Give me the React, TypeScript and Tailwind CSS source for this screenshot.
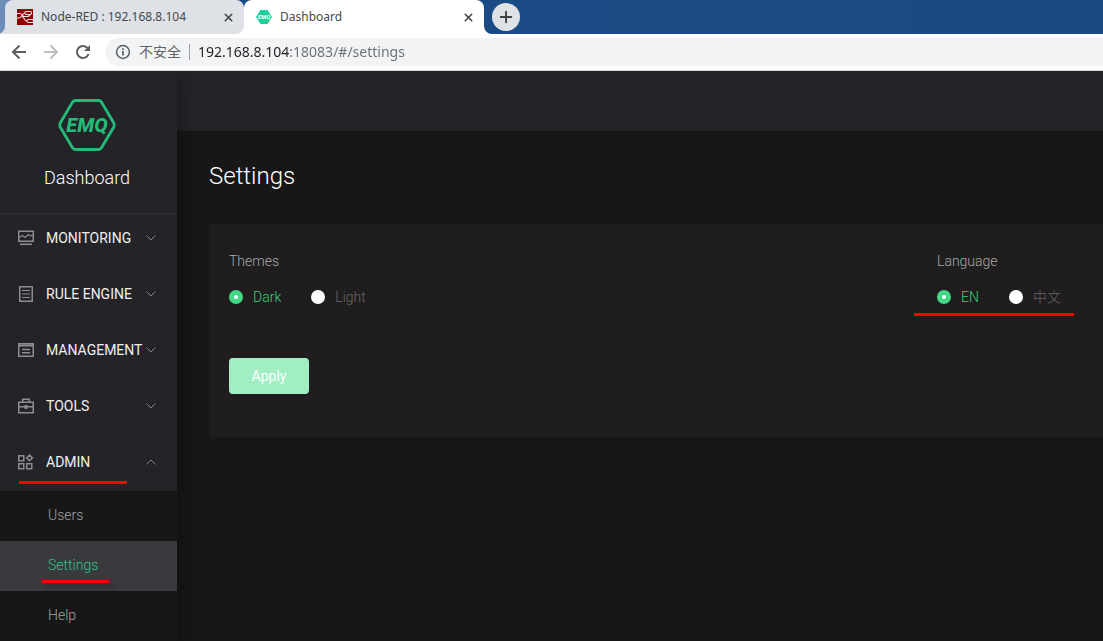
import { useState } from 'react';
import type { ReactNode } from 'react';
import clsx from 'clsx';
import { Plus, X } from 'lucide-react';

type MenuItem = {
  label: string;
  icon: ReactNode;
  open?: boolean;
};

const menu: MenuItem[] = [
  {
    label: 'MONITORING',
    icon: (
      <>
        <path d="M0.75 1.25h14.5v10H0.75z" />
        <path d="M1 7.5l3.5-2 2.5 2 3.5-3 2 1.5 2.5-1" strokeWidth="1.2" />
        <path d="M2 14.25h12" />
      </>
    ),
  },
  {
    label: 'RULE ENGINE',
    icon: (
      <>
        <path d="M1.75 0.75h12.5v14.5H1.75z" />
        <path d="M4 4.5h8M4 8h8M4 11.5h8" strokeWidth="1.2" />
      </>
    ),
  },
  {
    label: 'MANAGEMENT',
    icon: (
      <>
        <path d="M0.75 1.75h14.5v12.5H0.75z" />
        <path d="M1 3.5h14" strokeWidth="2" />
        <path d="M4 7.5h8M4 10.75h8" />
        <path d="M4.5 7v1M11.5 10v1.5" strokeWidth="1" />
      </>
    ),
  },
  {
    label: 'TOOLS',
    icon: (
      <>
        <path d="M0.75 4.25h14.5v10.5H0.75z" />
        <path d="M4.75 4V1.25h6.5V4" />
        <path d="M1 8.75h14" />
        <path d="M6.75 7.5h2.5v3h-2.5z" fill="currentColor" strokeWidth="0.8" />
      </>
    ),
  },
  {
    label: 'ADMIN',
    open: true,
    icon: (
      <>
        <path d="M0.75 1.75h5v5h-5zM0.75 9.75h5v5h-5zM8.75 9.75h5v5h-5z" />
        <path d="M11.5 1l2.9 2.9-2.9 2.9-2.9-2.9z" />
      </>
    ),
  },
];

const adminLinks = ['Users', 'Settings', 'Help'];

function TabFlare({ className }: { className: string }) {
  return (
    <svg className={clsx('absolute bottom-0 h-2 w-2', className)} viewBox="0 0 8 8" fill="currentColor">
      <path d="M0 0v8h8A8 8 0 0 1 0 0z" />
    </svg>
  );
}

function NodeRedIcon() {
  return (
    <svg className="h-4 w-4 shrink-0" viewBox="0 0 16 16" fill="none">
      <rect width="16" height="16" fill="#8f0000" />
      <g stroke="#f3dede" strokeWidth="1.1">
        <rect x="8" y="2.5" width="6.5" height="3" rx="1.2" />
        <rect x="10" y="10.5" width="6.5" height="3" rx="1.2" />
        <path d="M0 4.5h3c2 0 2 3 4.5 3h2c3 0 3.5-1.5 3.5-2M0 9h2c3 0 3-5 6-5M5 7.500c2 0 2 4.500 5 4.500" />
      </g>
    </svg>
  );
}

function EmqFavicon() {
  return (
    <svg className="h-4 w-4 shrink-0" viewBox="0 0 16 16">
      <path d="M4.5 1h7L16 8l-4.5 7h-7L0 8z" fill="#1fd09a" />
      <text x="8" y="10" textAnchor="middle" fontFamily="Roboto, sans-serif" fontSize="6" fontWeight="700" fontStyle="italic" fill="#fff">
        EMQ
      </text>
    </svg>
  );
}

function BrowserChrome() {
  const [url, setUrl] = useState('192.168.8.104:18083/#/settings');

  return (
    <header className="relative z-20 font-['Noto_Sans','Noto_Sans_CJK_SC',sans-serif]">
      <div className="flex h-[34px] bg-linear-to-r from-[#6e8db8] from-0% via-[#1b4b86] via-20% to-[#194a80] pl-[5px] text-xs text-[#45494d]">
        <div className="relative flex w-[239px] items-center rounded-t-lg bg-[#dee1e6] pr-2 pl-3">
          <TabFlare className="-left-2 -scale-x-100 text-[#dee1e6]" />
          <NodeRedIcon />
          <span className="ml-2 flex-1 truncate">Node-RED : 192.168.8.104</span>
          <button aria-label="Close Node-RED tab" className="flex h-4 w-4 items-center justify-center">
            <X size={13} strokeWidth={3} />
          </button>
        </div>
        <div className="relative flex w-60 items-center rounded-t-lg bg-white pr-2 pl-3">
          <TabFlare className="-left-2 -scale-x-100 text-white" />
          <EmqFavicon />
          <span className="ml-2 flex-1 truncate">Dashboard</span>
          <button aria-label="Close Dashboard tab" className="flex h-4 w-4 items-center justify-center">
            <X size={13} strokeWidth={3} />
          </button>
          <TabFlare className="-right-2 text-white" />
        </div>
        <button
          aria-label="New tab"
          className="ml-2 flex h-7 w-7 items-center justify-center self-center rounded-full bg-[#dee1e6] text-[#3c4043]"
        >
          <Plus size={18} strokeWidth={2.5} />
        </button>
      </div>

      <div className="flex h-[37px] items-center border-b border-[#d5d8db] bg-white pl-[11px]">
        <button aria-label="Back" className="mr-4 text-[#5a5e63]">
          <svg className="h-4 w-4" viewBox="0 0 16 16" fill="none" stroke="currentColor" strokeWidth="2">
            <path d="M15 8H2.5M8.5 1.5L2 8l6.5 6.5" />
          </svg>
        </button>
        <button aria-label="Forward" className="mr-4 text-[#bcbec1]">
          <svg className="h-4 w-4" viewBox="0 0 16 16" fill="none" stroke="currentColor" strokeWidth="2">
            <path d="M1 8h12.5M7.5 1.5L14 8l-6.5 6.5" />
          </svg>
        </button>
        <button aria-label="Reload" className="text-[#5a5e63]">
          <svg className="h-4 w-4" viewBox="0 0 16 16" fill="none" stroke="currentColor" strokeWidth="2">
            <path d="M13.6 10A6 6 0 1 1 12.6 4.2" />
            <path d="M15 1v6H9z" fill="currentColor" stroke="none" />
          </svg>
        </button>
        <div className="ml-3.5 flex h-7 flex-1 items-center rounded-l-full bg-[#f1f3f4] pl-2.5 text-sm">
          <svg className="h-4 w-4 text-[#5a5e63]" viewBox="0 0 16 16" fill="none" stroke="currentColor">
            <circle cx="8" cy="8" r="6.4" strokeWidth="1.5" />
            <path d="M8 7v4.5M8 4.3v1.7" strokeWidth="1.7" />
          </svg>
          <span className="ml-2 text-[#5f6368]">不安全</span>
          <span className="mx-2 h-4 w-px bg-[#9aa0a6]" />
          <input
            aria-label="Address"
            value={url}
            onChange={(e) => setUrl(e.target.value)}
            className="min-w-0 flex-1 bg-[linear-gradient(to_right,#202124_92px,#6b6f74_92px)] bg-clip-text text-transparent caret-black outline-none"
          />
        </div>
      </div>
    </header>
  );
}

function Logo() {
  return (
    <svg className="h-[54px] w-[60px]" viewBox="0 0 60 54" fill="none">
      <path
        d="M18.5 2.5h23q2 0 3 1.700l12.300 20.800q1 2 0 4L44.500 49.800q-1 1.700-3 1.700h-23q-2 0-3-1.700L3.200 29q-1-2 0-4L15.500 4.200q1-1.700 3-1.700z"
        stroke="#22bb7a"
        strokeWidth="2.8"
      />
      <text x="30" y="34" textAnchor="middle" fontFamily="Roboto, sans-serif" fontSize="20" fontWeight="800" fontStyle="italic" fill="#22bb7a">
        EMQ
      </text>
    </svg>
  );
}

function Sidebar() {
  return (
    <aside className="z-10 w-[177px] shrink-0 bg-[#242328] shadow-[2px_6px_20px_rgba(0,0,0,0.35)]">
      <div className="flex h-[143px] flex-col items-center border-b border-[#2e2d32] pt-[27px] pr-[3px]">
        <Logo />
        <span className="mt-3 text-lg leading-7 text-white">Dashboard</span>
      </div>
      <nav>
        <div className="flex flex-col gap-2 pb-[5px]">
          {menu.map((item) => (
            <button key={item.label} aria-expanded={!!item.open} className="relative flex h-12 items-center pr-5 pl-[18px] text-left">
              <svg className="h-4 w-4 shrink-0 text-[#8b8d92]" viewBox="0 0 16 16" fill="none" stroke="currentColor" strokeWidth="1.5">
                {item.icon}
              </svg>
              <span className="ml-3 flex-1 text-sm font-normal whitespace-nowrap text-[#f0f0f0]">{item.label}</span>
              <svg
                className={clsx('h-3 w-3 shrink-0 text-[#85868a]', item.open && 'rotate-180')}
                viewBox="0 0 12 12"
                fill="none"
                stroke="currentColor"
              >
                <path d="M1.5 3.5L6 8l4.5-4.5" />
              </svg>
              {item.open && <span className="absolute bottom-0.5 left-[19px] h-[3px] w-[108px] bg-[#ff0000]" />}
            </button>
          ))}
        </div>
        <ul className="bg-[#171717]">
          {adminLinks.map((name) => {
            const active = name === 'Settings';
            return (
              <li key={name} className="relative">
                <a
                  href={`#/${name.toLowerCase()}`}
                  className={clsx(
                    'block h-[50px] pl-12 text-sm leading-[48px]',
                    active ? 'bg-[#393a3d] text-[#34c388]' : 'text-[#a3a3a5]'
                  )}
                >
                  {name}
                </a>
                {active && (
                  <span className="absolute bottom-2 left-[42px] h-[3px] w-[67px] bg-[#ff0000] shadow-[4px_4px_4px_rgba(0,0,0,0.3)]" />
                )}
              </li>
            );
          })}
        </ul>
      </nav>
    </aside>
  );
}

type RadioGroupProps = {
  title: string;
  name: string;
  options: string[];
  children?: ReactNode;
};

function RadioGroup({ title, name, options, children }: RadioGroupProps) {
  const [value, setValue] = useState(options[0]);

  return (
    <fieldset className="relative">
      <legend className="text-sm leading-[34px] text-[#a9a9ab]">{title}</legend>
      <div className="flex h-[38px] items-center gap-[30px]">
        {options.map((option) => (
          <label
            key={option}
            className={clsx('flex items-center gap-2.5 text-sm', value === option ? 'text-[#34d378]' : 'text-[#66666a]')}
          >
            <input
              type="radio"
              name={name}
              checked={value === option}
              onChange={() => setValue(option)}
              className="h-3.5 w-3.5 appearance-none rounded-full bg-white checked:border-5 checked:border-[#42d885]"
            />
            {option}
          </label>
        ))}
      </div>
      {children}
    </fieldset>
  );
}

export default function App() {
  return (
    <div className="flex min-h-screen flex-col overflow-hidden bg-[#171717]">
      <BrowserChrome />
      <div className="flex flex-1 font-['Roboto','Noto_Sans_CJK_SC',sans-serif] font-light">
        <Sidebar />
        <div className="min-w-0 flex-1">
          <div className="h-[60px] bg-[#242328]" />
          <main className="pt-[31px] pl-8">
            <h1 className="text-2xl leading-7 text-white">Settings</h1>
            <form className="mt-[34px] rounded-l bg-[#201d1e] px-5 pt-5 pb-[43px]" onSubmit={(e) => e.preventDefault()}>
              <div className="flex">
                <div className="flex-1">
                  <RadioGroup title="Themes" name="theme" options={['Dark', 'Light']} />
                </div>
                <div className="w-[146px]">
                  <RadioGroup title="Language" name="language" options={['EN', '中文']}>
                    <span className="absolute bottom-0 -left-[23px] h-[3px] w-40 bg-[#ff0000]" />
                  </RadioGroup>
                </div>
              </div>
              <button type="submit" className="mt-[42px] h-9 w-20 rounded bg-[#a1eec3] text-sm font-normal text-white">
                Apply
              </button>
            </form>
          </main>
        </div>
      </div>
    </div>
  );
}
